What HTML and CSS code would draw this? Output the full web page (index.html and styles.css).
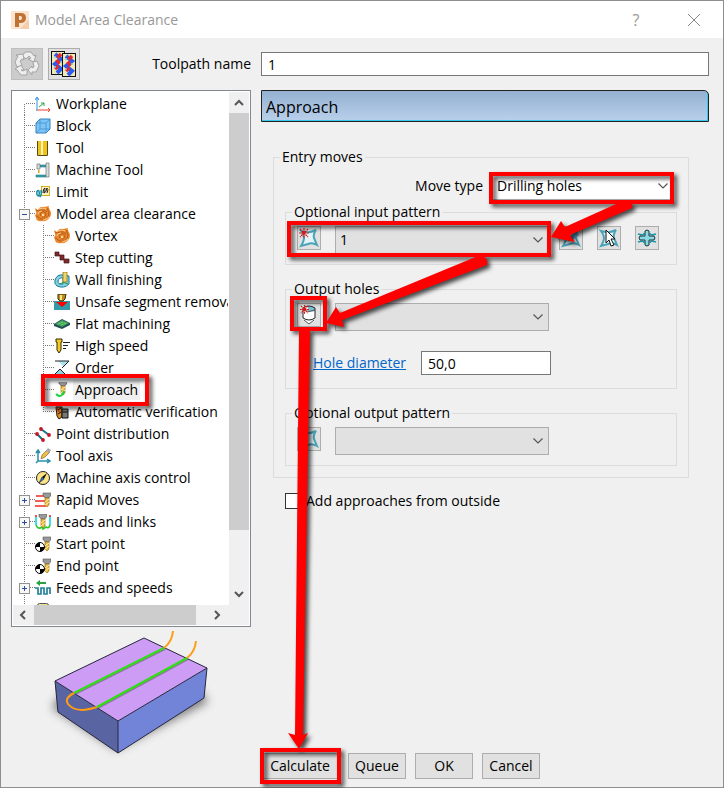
FILE: index.html
```html
<!DOCTYPE html>
<html lang="en">
<head>
    <meta charset="UTF-8">
    <meta name="viewport" content="width=device-width, initial-scale=1.0">
    <title>Model Area Clearance</title>
    <link rel="stylesheet" href="styles.css">
</head>
<body>

    <!-- Shared icon shapes -->
    <svg class="defs" width="0" height="0" aria-hidden="true">
        <symbol id="swirl" viewBox="0 0 16 16">
            <path d="M0 2L3 4Q5 0 9 1L14 0Q13 2 15 4Q17 8 15 11Q12 16 7 15Q2 16 1 12L0 9Q2 8 1 6Z" fill="#ea872d"/>
            <path d="M1 4Q3 6 6 4Q10 3 12 6M13 2Q12 4 14 7Q14 11 11 12M1 10Q3 10 4 12Q7 14 10 13" fill="none" stroke="#b35a14"/>
            <path d="M4 3Q8 1 11 3M3 8Q3 5 7 5M14 11Q11 14 8 14" fill="none" stroke="#ffc98a"/>
            <path d="M6 10Q4 7 7 6Q11 5 11 9Q10 12 7 11" fill="none" stroke="#b35a14"/>
            <circle cx="8" cy="9" r="1.200" fill="#ffd9a8"/>
        </symbol>
        <symbol id="drill" viewBox="0 0 16 16">
            <path d="M8 1H16V4H15L14 6H10L9 4H8Z" fill="#9a9a9a" stroke="#555" stroke-width=".6"/>
            <path d="M10 6H14V13L12 15L10 13Z" fill="#e9b93c" stroke="#8b6512" stroke-width=".6"/>
            <path d="M10 10L14 7M10 13L14 10" stroke="#fff0a8"/>
        </symbol>
        <symbol id="point" viewBox="0 0 16 16">
            <use href="#drill"/>
            <circle cx="5" cy="11" r="4.500" fill="#fff" stroke="#000"/>
            <path d="M5 11V6.500A4.500 4.500 0 0 0 .5 11ZM5 11V15.500A4.500 4.500 0 0 0 9.500 11Z"/>
        </symbol>
        <symbol id="star" viewBox="0 0 20 20">
            <path d="M2 3L7 4Q11 5 17 2Q14 6 15 10L18 17Q13 14 9 16L2 18Q5 13 5 10Q5 7 2 3Z" fill="#e4f3f7" stroke="#4ba3b8" stroke-width="2"/>
        </symbol>
        <symbol id="spark" viewBox="0 0 10 10">
            <path d="M5 0V10M0 5H10M1 1L9 9M9 1L1 9" stroke="#e01010" stroke-width="1.200" stroke-dasharray="2 .6"/>
        </symbol>
        <symbol id="sheet" viewBox="0 0 14 24">
            <rect x=".5" y=".5" width="13" height="23" fill="#efe8b7" stroke="#111"/>
            <path d="M4 3L10 8L4 13L10 18L6 22" stroke="#2a5cf0" stroke-width="4" fill="none"/>
            <path d="M10 3L5 8L9 13L4 18" stroke="#e8252c" stroke-width="3.500" stroke-dasharray="5 3" fill="none"/>
            <path d="M3 6H5M9 11H11M3 16H5" stroke="#6fd2f5" stroke-width="1.500"/>
        </symbol>
    </svg>

    <div class="window">
        <header class="titlebar">
            <svg class="app-icon" width="18" height="18" viewBox="0 0 18 18">
                <rect width="18" height="18" fill="#fbe3cf"/>
                <path d="M9 18L18 8V18Z" fill="#f5cfad"/>
                <path d="M4 16V2H10Q15 2 15 7Q15 12 9 12H8V16ZM8 5V9H9.500Q11 9 11 7Q11 5 9.500 5Z" fill="#bd7334" fill-rule="evenodd"/>
            </svg>
            <h1>Model Area Clearance</h1>
            <button class="caption help" aria-label="Help">?</button>
            <button class="caption" aria-label="Close">
                <svg width="14" height="14" viewBox="0 0 14 14"><path d="M1 1L13 13M13 1L1 13" stroke="#888" fill="none"/></svg>
            </button>
        </header>

        <div class="name-row">
            <button class="big-button disabled" aria-label="Recycle toolpath" disabled>
                <svg width="28" height="28" viewBox="0 0 28 28">
                    <g fill="#eee" stroke="#a5a5a5">
                        <path d="M9 5L13 2H18L21 6L23 5L21 12L15 9L18 8L16 6L13 9Z"/>
                        <path d="M20 12L24 11L26 16L23 22H19V25L15 20L19 16V18L21 17Z"/>
                        <path d="M14 19V25H8L4 20L2 19L8 15L11 20L8 20L10 21Z"/>
                        <path d="M9 15L4 17L2 12L5 6L3 5L10 4L11 10L9 9L7 11Z"/>
                    </g>
                </svg>
            </button>
            <button class="big-button" aria-label="Copy toolpath">
                <svg width="28" height="28" viewBox="0 0 28 28">
                    <use href="#sheet" x="1" y="1" width="14" height="24"/>
                    <use href="#sheet" x="12" y="3" width="14" height="24"/>
                </svg>
            </button>
            <label for="toolpathName">Toolpath name</label>
            <input id="toolpathName" type="text" value="1">
        </div>

        <main class="content">
            <aside class="sidebar">
                <div class="tree-box">
                    <nav class="tree-view">
                        <ul class="tree">
                            <li><div class="row first"><span class="twig"></span>
                                <svg class="icon" viewBox="0 0 16 16"><path d="M2 14V2M0 4L2 1L4 4" stroke="#2a92e0" fill="none"/><path d="M3 14H15M13 12L15 14L13 16" stroke="#ee4035" fill="none"/><path d="M4 11L9 7M6 7H9V10" stroke="#28a745" fill="none"/><path d="M1 13H3V15H1Z" fill="#aaa"/></svg>
                                <a href="#">Workplane</a></div></li>
                            <li><div class="row"><span class="twig"></span>
                                <svg class="icon" viewBox="0 0 16 16"><path d="M1 5L5 1H15V11L11 15H1Z" fill="#7dc4f8" stroke="#3482c0"/><path d="M1 5H11L15 1M11 5V15M5 1V11L1 15M5 11H15" stroke="#3e8dcb" fill="none" stroke-width=".7"/></svg>
                                <a href="#">Block</a></div></li>
                            <li><div class="row"><span class="twig"></span>
                                <svg class="icon" viewBox="0 0 16 16"><path d="M3 1H12V15H3Z" fill="#edc31f"/><path d="M6 1H8V15H6Z" fill="#fff4b5"/><path d="M2.500 1V15.500H12.500V1" stroke="#5c4b10" fill="none"/></svg>
                                <a href="#">Tool</a></div></li>
                            <li><div class="row"><span class="twig"></span>
                                <svg class="icon" viewBox="0 0 16 16"><path d="M1 13H11V15H1ZM5 3H11V5H5Z" fill="#37a3ad" stroke="#22757d" stroke-width=".6"/><path d="M11 1H14V15H11ZM2 2H5V7H2Z" fill="#d8dcdc" stroke="#6d7476" stroke-width=".7"/><path d="M3 8H4.500V11H3Z" fill="#e0a010"/></svg>
                                <a href="#">Machine Tool</a></div></li>
                            <li><div class="row"><span class="twig"></span>
                                <svg class="icon" viewBox="0 0 16 16"><rect x="6.500" y="2.500" width="8" height="9" fill="#fff4c8" stroke="#d4ad20"/><path d="M2 7Q5 5 4 12Q1 12 2 7M6 6Q7 10 5 13" stroke="#168ba0" stroke-width="1.500" fill="none"/><path d="M8 9Q8 4 10 4Q10 8 9 9Q11 9 12 4Q14 5 12 9" stroke="#222" fill="none"/></svg>
                                <a href="#">Limit</a></div></li>
                            <li><div class="row"><span class="twig"><button class="expander" aria-label="Collapse"></button></span>
                                <svg class="icon"><use href="#swirl"/></svg>
                                <a href="#">Model area clearance</a></div>
                                <ul>
                                    <li><div class="row"><span class="twig"></span>
                                        <svg class="icon"><use href="#swirl"/></svg>
                                        <a href="#">Vortex</a></div></li>
                                    <li><div class="row"><span class="twig"></span>
                                        <svg class="icon" viewBox="0 0 16 16"><path d="M1 2H5V5H10V9H15V13H10V10H6V6H1Z" fill="#7e2a2c" stroke="#481416" stroke-width=".7"/></svg>
                                        <a href="#">Step cutting</a></div></li>
                                    <li><div class="row"><span class="twig"></span>
                                        <svg class="icon" viewBox="0 0 16 16"><path d="M1 8Q3 2 9 3L15 4V12Q10 17 3 14Q0 12 1 8Z" fill="#87cfe5" stroke="#137b96"/><path d="M4 9Q5 5 9 6V12Q4 13 4 9Z" fill="#fff" stroke="#137b96"/><path d="M9 0H13V10H9Z" fill="#f3d365" stroke="#846715" stroke-width=".7"/><path d="M5 12Q10 9 14 12" stroke="#2c9c3f" fill="none"/></svg>
                                        <a href="#">Wall finishing</a></div></li>
                                    <li><div class="row"><span class="twig"></span>
                                        <svg class="icon" viewBox="0 0 16 16"><path d="M0 7H16V16H0Z" fill="#329aa8"/><path d="M2 8H14L8 13Z" fill="#f00"/><path d="M4 0H12L11 5L9 7H6L4 5Z" fill="#b88c1e" stroke="#403009"/><path d="M7 1V6" stroke="#ffe681" stroke-width="2"/></svg>
                                        <a href="#">Unsafe segment removal</a></div></li>
                                    <li><div class="row"><span class="twig"></span>
                                        <svg class="icon" viewBox="0 0 16 16"><path d="M0 8L8 3L16 7V9L8 13L0 10Z" fill="#214d54"/><path d="M1 8L8 4L15 7L8 11Z" fill="#469c65"/><path d="M4 8L9 6M7 9L12 7" stroke="#68dc54"/></svg>
                                        <a href="#">Flat machining</a></div></li>
                                    <li><div class="row"><span class="twig"></span>
                                        <svg class="icon" viewBox="0 0 16 16"><path d="M2 1H8V4H7V12L5 15L3 12V4H2Z" fill="#f4c91f" stroke="#332b05"/><path d="M9 4.500H16M9 7.500H14M9 10.500H12" stroke="#222"/></svg>
                                        <a href="#">High speed</a></div></li>
                                    <li><div class="row"><span class="twig"></span>
                                        <svg class="icon" viewBox="0 0 16 16"><path d="M4 1H15L10 7Z" fill="#a9e3ef"/><path d="M0 15L6 9L12 15Z" fill="#8fd4e4"/><path d="M0 15L6 9L12 15M1 1H15L8 8" stroke="#222" fill="none"/></svg>
                                        <a href="#">Order</a></div></li>
                                    <li><div class="row"><span class="twig"></span>
                                        <svg class="icon" viewBox="0 0 16 16"><g transform="translate(-3 -2)"><use href="#drill" width="16" height="16"/></g><path d="M2 12Q6 16 9 12L10 9" stroke="#17d23a" stroke-width="2" fill="none"/></svg>
                                        <a href="#" class="selected">Approach</a></div></li>
                                    <li><div class="row last"><span class="twig"></span>
                                        <svg class="icon" viewBox="0 0 16 16"><path d="M2 3H8V13L5 15L3 12Z" fill="#d88c24" stroke="#26180a"/><path d="M8 5H14V14H8Z" fill="#777" stroke="#111"/><path d="M8 8H14M4 6L7 4M4 10L7 8" stroke="#111"/><path d="M2 3L6 9" stroke="#d51d12"/></svg>
                                        <a href="#">Automatic verification</a></div></li>
                                </ul>
                            </li>
                            <li><div class="row"><span class="twig"></span>
                                <svg class="icon" viewBox="0 0 16 16"><path d="M2 8L8 14M6 3L14 9" stroke="#1b7185" stroke-width="2"/><g fill="#c51524"><circle cx="2" cy="8" r="1.900"/><circle cx="8" cy="14" r="1.900"/><circle cx="6" cy="3" r="1.900"/><circle cx="14" cy="9" r="1.900"/></g></svg>
                                <a href="#">Point distribution</a></div></li>
                            <li><div class="row"><span class="twig"></span>
                                <svg class="icon" viewBox="0 0 16 16"><path d="M3 13V2M1 5L3 2L5 5M3 13H15M12 11L15 13L12 15M3 13L1 15" stroke="#2990a9" fill="none" stroke-width="1.500"/><path d="M6 11L7 7L12 2L15 4L10 9Z" fill="#efbd4b" stroke="#8a6728" stroke-width=".7"/><path d="M11 3L13 0L16 2L14 5Z" fill="#aaa"/></svg>
                                <a href="#">Tool axis</a></div></li>
                            <li><div class="row"><span class="twig"></span>
                                <svg class="icon" viewBox="0 0 16 16"><circle cx="8" cy="8" r="6.500" fill="#fee386" stroke="#222"/><path d="M12 3L9 9L7 7Z" fill="#111"/><path d="M4 13L7 7L9 9Z" fill="#1679d1" stroke="#111" stroke-width=".5"/></svg>
                                <a href="#">Machine axis control</a></div></li>
                            <li><div class="row"><span class="twig"><button class="expander plus" aria-label="Expand"></button></span>
                                <svg class="icon" viewBox="0 0 16 16"><path d="M1 4H10M0 9H11M0 14H11" stroke="#ef2c20" stroke-width="1.600"/><use href="#drill"/></svg>
                                <a href="#">Rapid Moves</a></div></li>
                            <li><div class="row"><span class="twig"><button class="expander plus" aria-label="Expand"></button></span>
                                <svg class="icon" viewBox="0 0 16 16"><path d="M1 3V11M15 3V11" stroke="#12d5e4" stroke-width="1.600"/><path d="M1 1V3M15 1V3" stroke="#f02020" stroke-width="1.600"/><path d="M1 11Q3 16 7 13L8 15L11 13Q14 15 15 11" stroke="#28cc30" stroke-width="1.600" fill="none"/><g transform="translate(-4 -1)"><use href="#drill" width="16" height="16"/></g></svg>
                                <a href="#">Leads and links</a></div></li>
                            <li><div class="row"><span class="twig"></span>
                                <svg class="icon"><use href="#point"/></svg>
                                <a href="#">Start point</a></div></li>
                            <li><div class="row"><span class="twig"></span>
                                <svg class="icon"><use href="#point"/></svg>
                                <a href="#">End point</a></div></li>
                            <li><div class="row"><span class="twig"><button class="expander plus" aria-label="Expand"></button></span>
                                <svg class="icon" viewBox="0 0 16 16"><path d="M0 8H3V14H6V8H9V14H12V8H15V14" stroke="#22829a" stroke-width="1.700" fill="none"/><path d="M1 3L5 0V2H11V4H5V6Z" fill="#25a344"/></svg>
                                <a href="#">Feeds and speeds</a></div></li>
                            <li><div class="row"><span class="twig"></span>
                                <svg class="icon" viewBox="0 0 16 16"><rect x="2.500" y="1.500" width="11" height="13" rx="2" fill="#eee38a" stroke="#555"/></svg></div></li>
                        </ul>
                    </nav>
                    <div class="vscroll">
                        <svg width="12" height="8" viewBox="0 0 12 8"><path d="M2 6L6 2L10 6" stroke="#555" stroke-width="2" fill="none"/></svg>
                        <span class="thumb"></span>
                        <svg width="12" height="8" viewBox="0 0 12 8"><path d="M2 2L6 6L10 2" stroke="#555" stroke-width="2" fill="none"/></svg>
                    </div>
                    <div class="hscroll">
                        <svg width="8" height="12" viewBox="0 0 8 12"><path d="M6 2L2 6L6 10" stroke="#555" stroke-width="2" fill="none"/></svg>
                        <span class="thumb"></span>
                        <svg width="8" height="12" viewBox="0 0 8 12"><path d="M2 2L6 6L2 10" stroke="#555" stroke-width="2" fill="none"/></svg>
                    </div>
                </div>

                <!-- Approach preview -->
                <svg class="preview" width="200" height="133" viewBox="0 7 200 133">
                    <defs><filter id="soft" x="-20%" y="-30%" width="140%" height="160%"><feGaussianBlur stdDeviation="5"/></filter></defs>
                    <path d="M22 88L86 130L178 82L170 70L90 110L30 75Z" fill="#555" opacity=".75" filter="url(#soft)"/>
                    <path d="M25 61L88 101V133L28 92Z" fill="#5964a3"/>
                    <path d="M88 101L177 48L174 78L88 133Z" fill="#7184d8"/>
                    <path d="M25 61L114 18L177 48L88 101Z" fill="#cd9df5"/>
                    <path d="M25 61L114 18L177 48L174 78L88 133L28 92ZM25 61L88 101L177 48M88 101V133" fill="none" stroke="#26263c" stroke-width="1"/>
                    <path d="M45 74L135 29M68 88L158 39" stroke="#555" stroke-width="2" opacity=".5"/>
                    <path d="M44 73L134 28M67 87L157 38" stroke="#2ee010" stroke-width="2"/>
                    <path d="M44 73Q34 78 38 84Q46 94 67 87M134 28Q142 22 143 11M157 38Q165 32 166 21" fill="none" stroke="#ff9c12" stroke-width="2"/>
                </svg>
            </aside>

            <section class="page">
                <h2>Approach</h2>

                <fieldset class="entry">
                    <legend>Entry moves</legend>
                    <div class="move-row">
                        <label for="moveType">Move type</label>
                        <select id="moveType" class="white"><option>Drilling holes</option></select>
                    </div>

                    <fieldset>
                        <legend>Optional input pattern</legend>
                        <div class="pattern-row">
                            <button class="tool-button" aria-label="New pattern">
                                <svg width="22" height="22" viewBox="0 0 22 22"><use href="#star" x="1" y="1" width="20" height="20"/><use href="#spark" x="1" y="1" width="10" height="10"/></svg>
                            </button>
                            <select aria-label="Input pattern"><option>1</option></select>
                            <div class="tools">
                                <button class="tool-button" aria-label="Edit pattern">
                                    <svg width="22" height="22" viewBox="0 0 22 22"><use href="#star" x="1" y="1" width="20" height="20"/><path d="M8 14L10 10L15 5L19 8L13 13Z" fill="#58b5e8"/><path d="M8 14L11 9L13 12Z" fill="#222"/></svg>
                                </button>
                                <button class="tool-button" aria-label="Select pattern">
                                    <svg width="22" height="22" viewBox="0 0 22 22"><use href="#star" x="1" y="1" width="20" height="20"/><path d="M8 3V16L11 13L13 19L16 18L13 12H17Z" fill="#fff" stroke="#111"/></svg>
                                </button>
                                <button class="tool-button" aria-label="Instance pattern">
                                    <svg width="22" height="22" viewBox="0 0 22 22"><path d="M2 7Q8 9 8 6M14 6Q14 9 20 7M2 15Q8 13 8 16M14 16Q14 13 20 15" stroke="#159ba9" stroke-width="1.500" fill="none"/><path d="M9 4Q11 2 13 4V9H18Q20 11 18 13H13V18Q11 20 9 18V13H4Q2 11 4 9H9Z" fill="#8ad8e3" stroke="#16343b"/></svg>
                                </button>
                            </div>
                        </div>
                    </fieldset>

                    <fieldset class="holes">
                        <legend>Output holes</legend>
                        <div class="pattern-row">
                            <button class="tool-button" aria-label="New hole feature set">
                                <svg width="22" height="22" viewBox="0 0 22 22"><path d="M5 4Q11 0 17 4V15L11 20L5 15Z" fill="#fff"/><path d="M10 2Q15 2 17 4V7Q13 8 10 7Z" fill="#79bed2"/><path d="M5 4Q11 0 17 4V14Q11 18 5 14Z" fill="none" stroke="#222"/><path d="M5 6Q11 9 17 6M6 16L11 20L16 16" fill="none" stroke="#555"/><use href="#spark" x="2" y="1" width="9" height="9"/></svg>
                            </button>
                            <select aria-label="Output holes"></select>
                        </div>
                        <div class="diameter-row">
                            <a href="#" id="diameterLabel">Hole diameter</a>
                            <input type="text" value="50,0" aria-labelledby="diameterLabel">
                        </div>
                    </fieldset>

                    <fieldset>
                        <legend>Optional output pattern</legend>
                        <div class="pattern-row">
                            <button class="tool-button" aria-label="New output pattern">
                                <svg width="22" height="22" viewBox="0 0 22 22"><use href="#star" x="1" y="1" width="20" height="20"/></svg>
                            </button>
                            <select aria-label="Output pattern"></select>
                        </div>
                    </fieldset>
                </fieldset>

                <label class="check"><input type="checkbox">Add approaches from outside</label>

                <footer class="buttons">
                    <button class="wide">Calculate</button>
                    <button>Queue</button>
                    <button>OK</button>
                    <button>Cancel</button>
                </footer>
            </section>
        </main>
    </div>

    <!-- Red step markers -->
    <svg class="marks" width="724" height="788" viewBox="0 0 724 788" aria-hidden="true">
        <g fill="none" stroke="#f00" stroke-width="4">
            <rect x="491" y="174" width="181" height="28"/>
            <rect x="289" y="223" width="260" height="32"/>
            <rect x="292" y="298" width="33" height="31"/>
            <rect x="43" y="376" width="104" height="28"/>
            <rect x="262" y="750" width="77" height="32"/>
        </g>
        <g fill="#f00">
            <path d="M551 237L561 221L565 227L625 200Q634 200 632 208L570 235L575 242Z"/>
            <path d="M326 323L336 307L340 313L478 256Q489 256 487 265L342 320L344 327Z"/>
            <path d="M299 331H310L303 735L308 733L299 749L288 733L295 735Z"/>
        </g>
    </svg>

</body>
</html>
```
FILE: styles.css
```css
* {
    margin: 0;
    padding: 0;
    box-sizing: border-box;
}

body {
    position: relative;
    font-family: 'Open Sans', 'Noto Sans', sans-serif;
    font-size: 14px;
    line-height: 20px;
    color: #000;
    background: #f0f0f0;
}

input, select, button {
    font: inherit;
    color: inherit;
}

.defs {
    position: absolute;
}

.window {
    display: flex;
    flex-direction: column;
    height: 100vh;
    border: 1px solid #8e8e8e;
}

/* Title bar */
.titlebar {
    display: flex;
    align-items: center;
    height: 37px;
    padding-left: 10px;
    background: #fff;
    color: #999;
}

.titlebar h1 {
    flex: 1;
    margin-left: 6px;
    font-size: 14px;
    font-weight: normal;
}

.caption {
    display: flex;
    align-items: center;
    justify-content: center;
    width: 58px;
    height: 37px;
    border: none;
    background: none;
}

.help {
    font-size: 16px;
}

/* Toolpath name */
.name-row {
    display: flex;
    align-items: center;
    gap: 5px;
    padding: 10px 14px 10px 10px;
}

.name-row label {
    width: 166px;
    margin-right: 5px;
    text-align: right;
}

.name-row input {
    flex: 1;
    min-width: 0;
}

input[type="text"] {
    height: 24px;
    padding: 0 6px;
    border: 1px solid #777;
    background: #fff;
}

.big-button {
    display: flex;
    align-items: center;
    justify-content: center;
    width: 32px;
    height: 32px;
    border: 1px solid #adadad;
    background: #e1e1e1;
}

.big-button.disabled {
    background: #ccc;
    border-color: #bfbfbf;
}

.content {
    display: flex;
    flex: 1;
    gap: 10px;
    min-height: 0;
    padding: 0 14px 8px 10px;
}

/* Tree */
.sidebar {
    display: flex;
    flex-direction: column;
    width: 240px;
}

.tree-box {
    flex: 1;
    display: grid;
    grid-template-columns: 1fr 20px;
    grid-template-rows: 1fr 20px;
    min-height: 0;
    padding: 1px;
    border: 1px solid #828790;
    background: #fff;
}

.tree-view {
    min-height: 0;
    overflow: hidden;
    margin-right: 1px;
    padding-top: 1px;
}

.tree, .tree ul {
    list-style: none;
}

.tree ul {
    padding-left: 19px;
    background: repeating-linear-gradient(#777 0 1px, transparent 1px 2px) 11px 0 / 1px 100% no-repeat;
}

.row {
    display: flex;
    align-items: center;
    height: 22px;
    white-space: nowrap;
}

.twig {
    flex: none;
    display: flex;
    align-items: center;
    width: 22px;
    height: 22px;
    background:
        repeating-linear-gradient(#777 0 1px, transparent 1px 2px) 11px 0 / 1px 100% no-repeat,
        repeating-linear-gradient(90deg, transparent 0 1px, #777 1px 2px) 12px 10px / 10px 1px no-repeat;
}

.first .twig {
    background-position: 11px 11px, 12px 10px;
}

.last .twig {
    background-size: 1px 11px, 10px 1px;
}

.expander {
    width: 11px;
    height: 11px;
    margin-left: 6px;
    border: 1px solid #919191;
    background: linear-gradient(#2b4b9b, #2b4b9b) center / 5px 1px no-repeat, #f8f8f8;
}

.expander.plus {
    background:
        linear-gradient(#2b4b9b, #2b4b9b) center / 5px 1px no-repeat,
        linear-gradient(#2b4b9b, #2b4b9b) center / 1px 5px no-repeat,
        #f8f8f8;
}

.icon {
    flex: none;
    width: 16px;
    height: 16px;
    margin-right: 3px;
}

.row a {
    padding: 0 2px;
    color: #000;
    text-decoration: none;
}

.row .selected {
    background: #f0f0f0;
}

.vscroll, .hscroll {
    display: flex;
    align-items: center;
    background: #f0f0f0;
}

.vscroll {
    flex-direction: column;
    gap: 6px;
    padding: 7px 0;
}

.vscroll .thumb {
    width: 20px;
    flex: 1;
    margin-bottom: 54px;
    background: #cdcdcd;
}

.hscroll {
    grid-column: 1 / 3;
    gap: 7px;
    padding: 0 28px 0 6px;
}

.hscroll .thumb {
    flex: 1;
    height: 20px;
    margin-right: 10px;
    background: #cdcdcd;
}

.preview {
    flex: none;
    width: 200px;
    height: 133px;
    margin: 0 0 19px 19px;
}

/* Approach page */
.page {
    flex: 1;
    display: flex;
    flex-direction: column;
    min-width: 0;
}

.page h2 {
    height: 32px;
    padding-left: 4px;
    border: 1px solid #222;
    border-radius: 0 5px 0 0;
    background: linear-gradient(#94b1d2, #b9d0ea);
    box-shadow: inset -1px -1px 0 #35c8ec;
    font-size: 16px;
    font-weight: normal;
    line-height: 32px;
}

fieldset {
    min-width: 0;
    padding: 4px 11px 10px;
    border: 1px solid #dcdcdc;
}

fieldset fieldset + fieldset {
    margin-top: 14px;
}

legend {
    height: 20px;
    margin-left: -5px;
    padding: 0 2px;
}

.entry {
    margin: 25px 20px 0 12px;
    padding-top: 5px;
    padding-bottom: 11px;
}

.holes {
    padding-bottom: 13px;
}

.move-row {
    display: flex;
    align-items: center;
    justify-content: flex-end;
    gap: 7px;
    margin-bottom: 2px;
    padding-right: 4px;
}

.pattern-row {
    display: flex;
    align-items: flex-start;
}

select {
    width: 214px;
    height: 28px;
    padding: 0 20px 0 4px;
    border: 1px solid #adadad;
    border-radius: 0;
    appearance: none;
    background: #e1e1e1 url("data:image/svg+xml,%3Csvg xmlns='http://www.w3.org/2000/svg' width='10' height='6'%3E%3Cpath d='M.5.5L5 5L9.500.5' fill='none' stroke='%23555' stroke-width='1.200'/%3E%3C/svg%3E") right 5px center no-repeat;
}

select.white {
    width: 183px;
    padding-left: 6px;
    background-color: #fff;
    background-position: right 4px center;
}

.tool-button {
    flex: none;
    display: flex;
    align-items: center;
    justify-content: center;
    width: 24px;
    height: 24px;
    border: 1px solid #adadad;
    background: #e1e1e1;
}

.pattern-row select {
    margin-left: 14px;
}

.tools {
    display: flex;
    gap: 14px;
    margin-left: 10px;
}

.diameter-row {
    display: flex;
    align-items: center;
    margin-top: 20px;
    padding-left: 16px;
}

.diameter-row a {
    width: 108px;
    color: #0066cc;
}

.diameter-row input {
    width: 130px;
}

.check {
    display: flex;
    align-items: center;
    gap: 5px;
    margin: 13px 0 0 24px;
}

.check input {
    width: 16px;
    height: 16px;
    border: 1px solid #333;
    appearance: none;
    background: #fff;
}

.buttons {
    display: flex;
    gap: 9px;
    margin-top: auto;
}

.buttons button {
    width: 58px;
    height: 26px;
    border: 1px solid #adadad;
    background: #e1e1e1;
}

.buttons .wide {
    width: 78px;
}

/* Markers lie over the dialog */
.marks {
    position: absolute;
    top: 0;
    left: 0;
    pointer-events: none;
    filter: drop-shadow(3px 3px 2px rgba(0, 0, 0, 0.7));
}
```
